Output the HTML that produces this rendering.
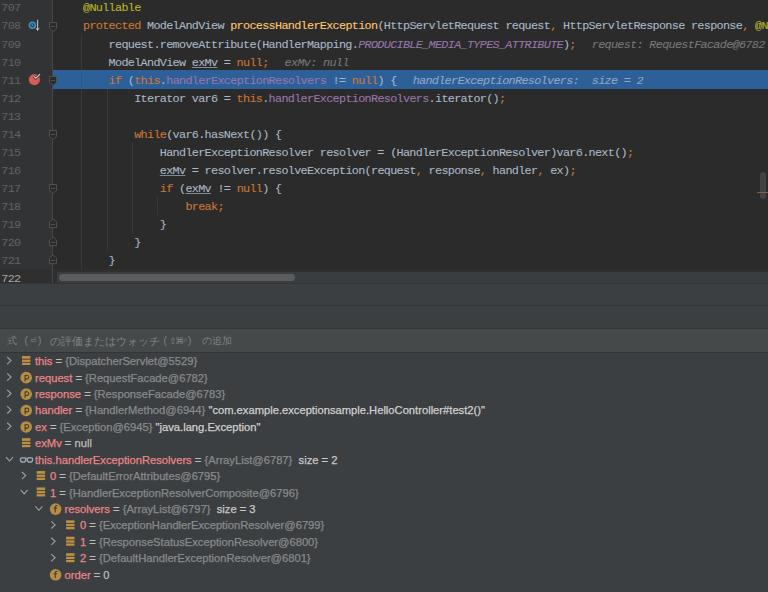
<!DOCTYPE html>
<html><head><meta charset="utf-8">
<style>
*{margin:0;padding:0;box-sizing:border-box}
html,body{width:768px;height:592px;overflow:hidden;background:#3C3F41}
#ed{position:absolute;left:0;top:0;width:768px;height:284px;background:#2B2B2B;overflow:hidden}
#gut{position:absolute;left:0;top:0;width:52px;height:284px;background:#313335}
#gline{position:absolute;left:52px;top:0;width:1px;height:284px;background:#474747}
#hl{position:absolute;left:53px;top:70px;width:715px;height:19px;background:#2D6099}
#caret{position:absolute;left:0;top:269px;width:768px;height:15px;background:#2F2F2F}
.ig{position:absolute;width:1px;background:#393939}
#nums{position:absolute;left:0;top:-0.6px;width:20.5px;letter-spacing:-0.68px;font:11.8px/18.05px "Liberation Mono",monospace;color:#606366;text-align:right}
#code{position:absolute;left:83px;top:-0.6px;letter-spacing:-0.68px;-webkit-text-stroke:0.1px currentColor;font:11.8px/18.05px "Liberation Mono",monospace;color:#A9B7C6;white-space:pre}
.k{color:#CC7832}.an{color:#BBB529}.fn{color:#FFC66D}.f{color:#9876AA}.st{color:#9876AA;font-style:italic}
.u{text-decoration:underline;text-decoration-color:#7F8B98;text-underline-offset:1px}
.h{color:#787878;font-style:italic}
.hb{color:#93A6C0;font-style:italic}
.fold{position:absolute;left:49px}
#hscroll{position:absolute;left:57px;top:271.5px;width:711px;height:11px;background:#3A3D3F}
#hthumb{position:absolute;left:59px;top:274px;width:236px;height:7px;border-radius:4px;background:#5A5C5E}
#vthumb{position:absolute;left:760px;top:172px;width:6px;height:27px;border-radius:3px;background:#424242}
#vmark{position:absolute;left:757px;top:191.5px;width:11px;height:1.5px;background:#8A5A40}
.band{position:absolute;left:0;width:768px;height:1px;background:#343537}
#watch{position:absolute;left:0;top:329px;width:768px;height:23px;background:#45494A;font:10px/24px "Liberation Sans",sans-serif;color:#7F8386}
#watch span{position:absolute;top:0}
#vars{position:absolute;left:0;top:353.085px;width:768px;font:11.2px "Liberation Sans",sans-serif;color:#BBBBBB;-webkit-text-stroke:0.25px currentColor}
.row{position:absolute;left:0;height:16.43px;line-height:16.43px;white-space:pre}
.nm{color:#E8858A}
.gr{color:#888A8C}
.sz{color:#C8C8C8}
.s{color:#D0D0D0}
.chev{position:absolute;top:0}
.ico{position:absolute}
</style></head><body>
<div id="ed">
  <div id="gut"></div>
  <div id="caret"></div>
  <div id="hl"></div>
  <div id="gline"></div>
  <div class="ig" style="left:81px;top:34.5px;height:234px"></div>
  <div class="ig" style="left:107px;top:88.5px;height:162px"></div>
  <div class="ig" style="left:132px;top:142.5px;height:90px"></div>
  <div class="ig" style="left:157px;top:196.5px;height:18px"></div>
  <div class="ig" style="left:81px;top:70px;height:19px;background:#28568A"></div>
  <svg style="position:absolute;left:0;top:0" width="768" height="284">
  <circle cx="32.4" cy="25.2" r="3.8" fill="#3A8FBE"/><circle cx="32.4" cy="25.2" r="2.0" fill="#313335"/><circle cx="32.4" cy="25.2" r="1.1" fill="#3A8FBE"/>
  <path d="M37.6,19.7V29" stroke="#BBBBBB" stroke-width="1.1"/><path d="M35.6,28.2H39.6L37.6,31Z" fill="#BBBBBB"/>
  <circle cx="34.4" cy="79.6" r="5.6" fill="#D65B5B"/>
  <path d="M33.7,76.3L35.8,78.2L40,74.2" fill="none" stroke="#313335" stroke-width="2.6"/>
  <path d="M33.7,76.3L35.8,78.2L40,74.2" fill="none" stroke="#C8C8C8" stroke-width="1.2"/>
<path d="M49.5,22.5H56.5V28.5L53,31.5L49.5,28.5Z" fill="#2B2B2B" stroke="#505050" stroke-width="1"/><path d="M51,26.5H55" stroke="#505050" stroke-width="1"/>
<path d="M49.5,76.5H56.5V82.5L53,85.5L49.5,82.5Z" fill="#2B2B2B" stroke="#505050" stroke-width="1"/><path d="M51,80.5H55" stroke="#505050" stroke-width="1"/>
<path d="M49.5,130.5H56.5V136.5L53,139.5L49.5,136.5Z" fill="#2B2B2B" stroke="#505050" stroke-width="1"/><path d="M51,134.5H55" stroke="#505050" stroke-width="1"/>
<path d="M49.5,184.5H56.5V190.5L53,193.5L49.5,190.5Z" fill="#2B2B2B" stroke="#505050" stroke-width="1"/><path d="M51,188.5H55" stroke="#505050" stroke-width="1"/>
<path d="M53,219.0L56.5,222.0V227.7H49.5V222.0Z" fill="#2B2B2B" stroke="#505050" stroke-width="1"/><path d="M51,224.5H55" stroke="#505050" stroke-width="1"/>
<path d="M53,237.0L56.5,240.0V245.7H49.5V240.0Z" fill="#2B2B2B" stroke="#505050" stroke-width="1"/><path d="M51,242.5H55" stroke="#505050" stroke-width="1"/>
<path d="M53,255.0L56.5,258.0V263.7H49.5V258.0Z" fill="#2B2B2B" stroke="#505050" stroke-width="1"/><path d="M51,260.5H55" stroke="#505050" stroke-width="1"/>
  </svg>
  <div id="nums">707
708
709
710
711
712
713
714
715
716
717
718
719
720
721
<span style="color:#A4A3A3">722</span></div>
  <div id="code"><span class="an">@Nullable</span>
<span class="k">protected </span>ModelAndView <span class="fn">processHandlerException</span>(HttpServletRequest request<span class="k">, </span>HttpServletResponse response<span class="k">, </span><span class="an">@N</span>
    request.removeAttribute(HandlerMapping.<span class="st">PRODUCIBLE_MEDIA_TYPES_ATTRIBUTE</span>)<span class="k">;</span>  <span class="h" style="margin-left:3.2px">request: RequestFacade@6782</span>
    ModelAndView <span class="u">exMv</span> = <span class="k">null;</span>  <span class="h" style="margin-left:3.2px">exMv: null</span>
    <span class="k">if </span>(<span class="k">this</span>.<span class="f">handlerExceptionResolvers</span> != <span class="k">null</span>) {  <span class="hb" style="margin-left:3.2px">handlerExceptionResolvers:  size = 2</span>
        Iterator var6 = <span class="k">this</span>.<span class="f">handlerExceptionResolvers</span>.iterator()<span class="k">;</span>

        <span class="k">while</span>(var6.hasNext()) {
            HandlerExceptionResolver resolver = (HandlerExceptionResolver)var6.next()<span class="k">;</span>
            <span class="u">exMv</span> = resolver.resolveException(request<span class="k">, </span>response<span class="k">, </span>handler<span class="k">, </span>ex)<span class="k">;</span>
            <span class="k">if </span>(<span class="u">exMv</span> != <span class="k">null</span>) {
                <span class="k">break;</span>
            }
        }
    }
</div>
  <div id="hscroll"></div>
  <div id="hthumb"></div>
  <div id="vthumb"></div>
  <div id="vmark"></div>
</div>
<div class="band" style="top:283px"></div>
<div class="band" style="top:305px"></div>
<div class="band" style="top:328px"></div>
<div id="watch"><span style="left:6.5px">式</span><span style="left:24.5px">(</span><span style="left:30px;font-size:7.5px">⏎</span><span style="left:38px">)</span><span style="left:50px;font-size:10.5px">の評価またはウォッチ</span><span style="left:163.5px">(</span><span style="left:168.5px;font-size:9px">⇧</span><span style="left:175px;font-size:8.5px">⌘</span><span style="left:181px;font-size:6.5px">⏎</span><span style="left:188px">)</span><span style="left:201.5px;font-size:10.3px">の追加</span></div>
<div class="band" style="top:352px"></div>
<div id="vars"><svg style="position:absolute;left:0;top:0" width="768" height="240">
<path d="M7.20,4.01L11.00,7.62L7.20,11.21" fill="none" stroke="#9FA2A4" stroke-width="1.1"/>
<rect x="22.00" y="3.02" width="8.4" height="2.7" fill="#BC8F42"/>
<rect x="22.00" y="6.62" width="8.4" height="2.3" fill="#BC8F42"/>
<rect x="22.00" y="9.71" width="8.4" height="2.3" fill="#BC8F42"/>
<path d="M7.20,20.45L11.00,24.04L7.20,27.64" fill="none" stroke="#9FA2A4" stroke-width="1.1"/>
<circle cx="26.20" cy="24.64" r="5.8" fill="#B68D45"/>
<path d="M25.10,28.34V22.04M25.10,23.25C25.70,21.84 28.70,21.75 28.70,24.04C28.70,26.45 25.90,26.54 25.10,25.04" fill="none" stroke="#4A3D2A" stroke-width="1.1"/>
<path d="M7.20,36.88L11.00,40.48L7.20,44.08" fill="none" stroke="#9FA2A4" stroke-width="1.1"/>
<circle cx="26.20" cy="41.08" r="5.8" fill="#B68D45"/>
<path d="M25.10,44.78V38.48M25.10,39.68C25.70,38.28 28.70,38.18 28.70,40.48C28.70,42.88 25.90,42.98 25.10,41.48" fill="none" stroke="#4A3D2A" stroke-width="1.1"/>
<path d="M7.20,53.30L11.00,56.90L7.20,60.50" fill="none" stroke="#9FA2A4" stroke-width="1.1"/>
<circle cx="26.20" cy="57.50" r="5.8" fill="#B68D45"/>
<path d="M25.10,61.20V54.90M25.10,56.10C25.70,54.70 28.70,54.60 28.70,56.90C28.70,59.30 25.90,59.40 25.10,57.90" fill="none" stroke="#4A3D2A" stroke-width="1.1"/>
<path d="M7.20,69.73L11.00,73.34L7.20,76.94" fill="none" stroke="#9FA2A4" stroke-width="1.1"/>
<circle cx="26.20" cy="73.94" r="5.8" fill="#B68D45"/>
<path d="M25.10,77.64V71.34M25.10,72.53C25.70,71.14 28.70,71.03 28.70,73.34C28.70,75.73 25.90,75.84 25.10,74.34" fill="none" stroke="#4A3D2A" stroke-width="1.1"/>
<rect x="22.00" y="85.17" width="8.4" height="2.7" fill="#BC8F42"/>
<rect x="22.00" y="88.77" width="8.4" height="2.3" fill="#BC8F42"/>
<rect x="22.00" y="91.87" width="8.4" height="2.3" fill="#BC8F42"/>
<path d="M6.00,104.09L9.50,108.00L13.00,104.09" fill="none" stroke="#9FA2A4" stroke-width="1.1"/>
<path d="M21.50,104.80H24.70Q25.80,104.80 25.80,106.39Q25.80,109.09 23.10,109.09Q20.40,109.09 20.40,106.39Q20.40,104.80 21.50,104.80Z" fill="none" stroke="#9AABB8" stroke-width="1.3"/>
<path d="M28.30,104.80H31.50Q32.60,104.80 32.60,106.39Q32.60,109.09 29.90,109.09Q27.20,109.09 27.20,106.39Q27.20,104.80 28.30,104.80Z" fill="none" stroke="#9AABB8" stroke-width="1.3"/>
<path d="M25.80,105.20H27.20" stroke="#9AABB8" stroke-width="1.0"/>
<path d="M21.90,119.02L25.70,122.62L21.90,126.22" fill="none" stroke="#9FA2A4" stroke-width="1.1"/>
<rect x="36.70" y="118.03" width="8.4" height="2.7" fill="#BC8F42"/>
<rect x="36.70" y="121.62" width="8.4" height="2.3" fill="#BC8F42"/>
<rect x="36.70" y="124.72" width="8.4" height="2.3" fill="#BC8F42"/>
<path d="M20.70,136.96L24.20,140.85L27.70,136.96" fill="none" stroke="#9FA2A4" stroke-width="1.1"/>
<rect x="36.70" y="134.46" width="8.4" height="2.7" fill="#BC8F42"/>
<rect x="36.70" y="138.06" width="8.4" height="2.3" fill="#BC8F42"/>
<rect x="36.70" y="141.16" width="8.4" height="2.3" fill="#BC8F42"/>
<path d="M35.40,153.39L38.90,157.28L42.40,153.39" fill="none" stroke="#9FA2A4" stroke-width="1.1"/>
<circle cx="55.60" cy="156.09" r="5.8" fill="#B68D45"/>
<path d="M55.20,159.59V154.28C55.20,152.78 56.40,152.39 57.60,152.89M53.60,155.09H57.10" fill="none" stroke="#4A3D2A" stroke-width="1.1"/>
<path d="M51.30,168.32L55.10,171.92L51.30,175.52" fill="none" stroke="#9FA2A4" stroke-width="1.1"/>
<rect x="66.10" y="167.32" width="8.4" height="2.7" fill="#BC8F42"/>
<rect x="66.10" y="170.92" width="8.4" height="2.3" fill="#BC8F42"/>
<rect x="66.10" y="174.02" width="8.4" height="2.3" fill="#BC8F42"/>
<path d="M51.30,184.75L55.10,188.34L51.30,191.94" fill="none" stroke="#9FA2A4" stroke-width="1.1"/>
<rect x="66.10" y="183.75" width="8.4" height="2.7" fill="#BC8F42"/>
<rect x="66.10" y="187.34" width="8.4" height="2.3" fill="#BC8F42"/>
<rect x="66.10" y="190.44" width="8.4" height="2.3" fill="#BC8F42"/>
<path d="M51.30,201.18L55.10,204.78L51.30,208.38" fill="none" stroke="#9FA2A4" stroke-width="1.1"/>
<rect x="66.10" y="200.18" width="8.4" height="2.7" fill="#BC8F42"/>
<rect x="66.10" y="203.78" width="8.4" height="2.3" fill="#BC8F42"/>
<rect x="66.10" y="206.88" width="8.4" height="2.3" fill="#BC8F42"/>
<circle cx="55.60" cy="221.81" r="5.8" fill="#B68D45"/>
<path d="M55.20,225.31V220.00C55.20,218.50 56.40,218.11 57.60,218.61M53.60,220.81H57.10" fill="none" stroke="#4A3D2A" stroke-width="1.1"/>
</svg>
  <div class="row" style="top:0.00px;left:35px"><span class="nm">this</span> = <span class="gr">{DispatcherServlet@5529}</span></div>
  <div class="row" style="top:16.43px;left:35px"><span class="nm">request</span> = <span class="gr">{RequestFacade@6782}</span></div>
  <div class="row" style="top:32.86px;left:35px"><span class="nm">response</span> = <span class="gr">{ResponseFacade@6783}</span></div>
  <div class="row" style="top:49.29px;left:35px"><span class="nm">handler</span> = <span class="gr">{HandlerMethod@6944}</span> <span class="s">"com.example.exceptionsample.HelloController#test2()"</span></div>
  <div class="row" style="top:65.72px;left:35px"><span class="nm">ex</span> = <span class="gr">{Exception@6945}</span> <span class="s">"java.lang.Exception"</span></div>
  <div class="row" style="top:82.15px;left:35px"><span class="nm">exMv</span> = null</div>
  <div class="row" style="top:98.58px;left:35px"><span class="nm">this.handlerExceptionResolvers</span> = <span class="gr">{ArrayList@6787}</span>  <span class="sz">size = 2</span></div>
  <div class="row" style="top:115.01px;left:50px"><span class="nm">0</span> = <span class="gr">{DefaultErrorAttributes@6795}</span></div>
  <div class="row" style="top:131.44px;left:50px"><span class="nm">1</span> = <span class="gr">{HandlerExceptionResolverComposite@6796}</span></div>
  <div class="row" style="top:147.87px;left:64.5px"><span class="nm">resolvers</span> = <span class="gr">{ArrayList@6797}</span>  <span class="sz">size = 3</span></div>
  <div class="row" style="top:164.30px;left:80px"><span class="nm">0</span> = <span class="gr">{ExceptionHandlerExceptionResolver@6799}</span></div>
  <div class="row" style="top:180.73px;left:80px"><span class="nm">1</span> = <span class="gr">{ResponseStatusExceptionResolver@6800}</span></div>
  <div class="row" style="top:197.16px;left:80px"><span class="nm">2</span> = <span class="gr">{DefaultHandlerExceptionResolver@6801}</span></div>
  <div class="row" style="top:213.59px;left:64.5px"><span class="nm">order</span> = 0</div>
</div>
</body></html>
